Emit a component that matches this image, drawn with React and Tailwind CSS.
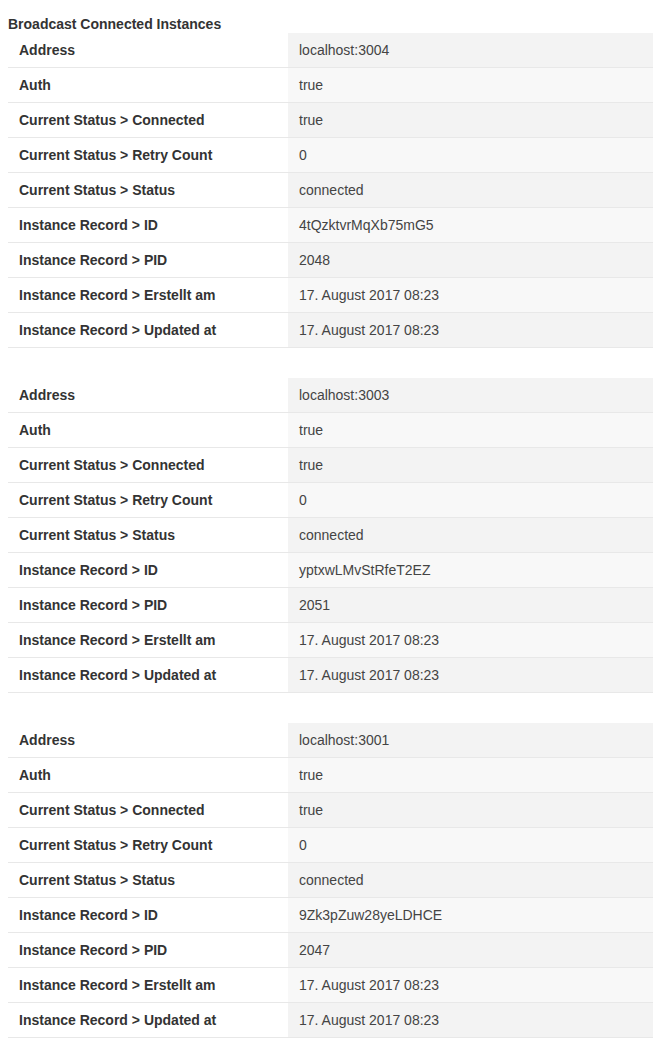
const instances = [
  { address: 'localhost:3004', id: '4tQzktvrMqXb75mG5', pid: '2048' },
  { address: 'localhost:3003', id: 'yptxwLMvStRfeT2EZ', pid: '2051' },
  { address: 'localhost:3001', id: '9Zk3pZuw28yeLDHCE', pid: '2047' },
];

const rowsFor = (inst) => [
  ['Address', inst.address],
  ['Auth', 'true'],
  ['Current Status > Connected', 'true'],
  ['Current Status > Retry Count', '0'],
  ['Current Status > Status', 'connected'],
  ['Instance Record > ID', inst.id],
  ['Instance Record > PID', inst.pid],
  ['Instance Record > Erstellt am', '17. August 2017 08:23'],
  ['Instance Record > Updated at', '17. August 2017 08:23'],
];

const InstanceTable = ({ inst }) => (
  <div className="flex flex-col">
    {rowsFor(inst).map(([label, value], i) => (
      <div key={label} className="flex h-[35px] border-b border-[#e8e8e8]">
        <div className="w-[280px] shrink-0 pl-[11px] flex items-center font-bold text-[14px] text-[#333]">
          {label}
        </div>
        <div
          className={`flex-1 pl-[11px] flex items-center text-[14px] text-[#444] ${
            i % 2 === 0 ? 'bg-[#f3f3f3]' : 'bg-[#f8f8f8]'
          }`}
        >
          {value}
        </div>
      </div>
    ))}
  </div>
);

export default function App() {
  return (
    <div className="min-h-screen bg-white pl-2 font-['Liberation_Sans',Arial,sans-serif]">
      <div className="pt-[16px] leading-[17px] text-[14px] font-bold text-[#333]">
        Broadcast Connected Instances
      </div>
      <div className="flex flex-col gap-[30px]">
        {instances.map((inst) => (
          <InstanceTable key={inst.address} inst={inst} />
        ))}
      </div>
    </div>
  );
}
